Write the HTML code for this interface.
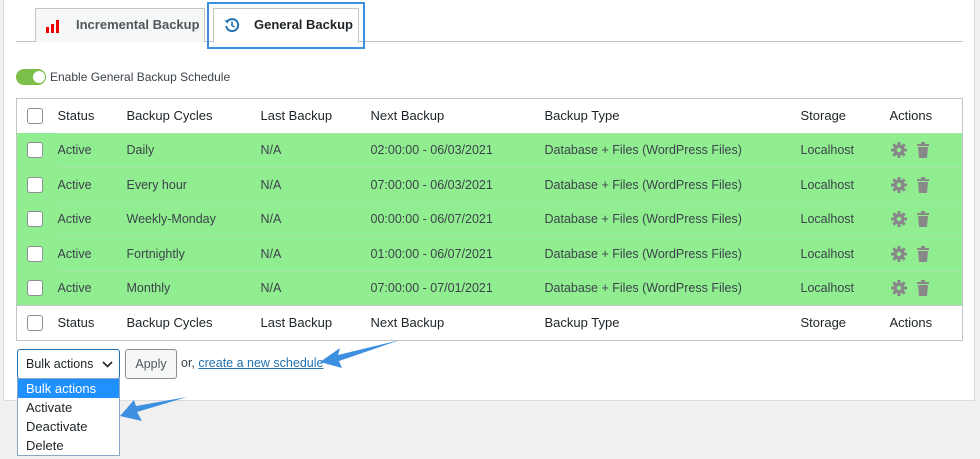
<!DOCTYPE html>
<html><head><style>
*{box-sizing:border-box;margin:0;padding:0}
body{width:980px;height:459px;background:#f0f0f1;font-family:"Liberation Sans",sans-serif;font-size:12.5px;color:#3c434a;position:relative;overflow:hidden}
.panel{position:absolute;left:3px;top:0;width:972px;height:401px;background:#fff;border:1px solid #dcdcde;border-top:none}
.abs{position:absolute;white-space:nowrap}
.tabline{position:absolute;left:16px;top:41px;width:947px;height:1px;background:#c3c4c7}
.tab{position:absolute;top:8px;height:34px;border:1px solid #c3c4c7;border-bottom:none;background:#f6f7f7;font-weight:bold;font-size:13px;line-height:32px;white-space:nowrap}
table{position:absolute;left:16px;top:98px;width:947px;border-collapse:collapse;border:1px solid #c3c4c7}
td{height:34.5px;padding:0;white-space:nowrap}
tr.g td{background:#90ee90;border-top:1px solid #a5e8a5}
tr.g td:first-child{border-top-color:#90ee90}
tr.h td{color:#1d2327;font-size:13px}
tr.f td{border-top:1px solid #c3c4c7}
.cb{display:inline-block;width:16px;height:16px;border:1px solid #8c8f94;border-radius:3px;background:#fff;vertical-align:middle;margin-left:10px}
.drop{position:absolute;left:17px;top:378px;width:103px;height:78px;border:1px solid #8ca6c8;background:#fff}
.drop div{height:19px;line-height:19px;padding-left:8px;font-size:13px;color:#1d2327}
</style></head><body>
<div class="panel"></div>
<div class="tabline"></div>
<div class="tab" style="left:35px;width:170px;color:#50575e;background:#f6f7f7">
 <svg class="abs" style="left:10px;top:10px" width="16" height="14"><rect x="0" y="8" width="3" height="6" fill="#e00"/><rect x="5" y="5" width="3" height="9" fill="#e00"/><rect x="10" y="1" width="3" height="13" fill="#e00"/></svg>
 <span class="abs" style="left:40px">Incremental Backup</span></div>
<div class="tab" style="left:213px;width:146px;background:#fff;color:#1d2327;height:35px">
 <svg class="abs" style="left:10px;top:8px" width="16" height="16" viewBox="0 0 16 16"><path d="M3 5A6 6 0 1 1 2.2 9" fill="none" stroke="#2271b1" stroke-width="2"/><path d="M0.5 3.5L3.5 6.5L5.5 2.5Z" fill="#2271b1"/><path d="M8 4.5V8.5L10.5 10" fill="none" stroke="#2271b1" stroke-width="1.6"/></svg>
 <span class="abs" style="left:40px">General Backup</span></div>
<div class="abs" style="left:207px;top:2px;width:158px;height:47px;border:2px solid #3d8fe0"></div>
<div class="abs" style="left:16px;top:69px;width:30px;height:16px;border-radius:8px;background:#7cbf48"></div>
<div class="abs" style="left:33px;top:71px;width:12px;height:12px;border-radius:6px;background:#fff"></div>
<div class="abs" style="left:50px;top:70px;font-size:12px;color:#3c434a">Enable General Backup Schedule</div>
<table>
<colgroup><col style="width:41px"><col style="width:69px"><col style="width:134px"><col style="width:110px"><col style="width:174px"><col style="width:256px"><col style="width:89px"><col></colgroup>
<tr class="h"><td><span class="cb"></span></td><td>Status</td><td>Backup Cycles</td><td>Last Backup</td><td>Next Backup</td><td>Backup Type</td><td>Storage</td><td>Actions</td></tr>
<tr class="g"><td><span class="cb"></span></td><td>Active</td><td>Daily</td><td>N/A</td><td>02:00:00 - 06/03/2021</td><td>Database + Files (WordPress Files)</td><td>Localhost</td><td class="ic"></td></tr>
<tr class="g"><td><span class="cb"></span></td><td>Active</td><td>Every hour</td><td>N/A</td><td>07:00:00 - 06/03/2021</td><td>Database + Files (WordPress Files)</td><td>Localhost</td><td class="ic"></td></tr>
<tr class="g"><td><span class="cb"></span></td><td>Active</td><td>Weekly-Monday</td><td>N/A</td><td>00:00:00 - 06/07/2021</td><td>Database + Files (WordPress Files)</td><td>Localhost</td><td class="ic"></td></tr>
<tr class="g"><td><span class="cb"></span></td><td>Active</td><td>Fortnightly</td><td>N/A</td><td>01:00:00 - 06/07/2021</td><td>Database + Files (WordPress Files)</td><td>Localhost</td><td class="ic"></td></tr>
<tr class="g"><td><span class="cb"></span></td><td>Active</td><td>Monthly</td><td>N/A</td><td>07:00:00 - 07/01/2021</td><td>Database + Files (WordPress Files)</td><td>Localhost</td><td class="ic"></td></tr>
<tr class="h f"><td><span class="cb"></span></td><td>Status</td><td>Backup Cycles</td><td>Last Backup</td><td>Next Backup</td><td>Backup Type</td><td>Storage</td><td>Actions</td></tr>
</table>
<script>
document.querySelectorAll('td.ic').forEach(function(t){t.innerHTML='<svg width="44" height="18" viewBox="0 0 44 18" style="vertical-align:middle;margin-left:1px"><g fill="#888"><circle cx="8" cy="9" r="5.5"/><g stroke="#888" stroke-width="3"><path d="M8 1v16M0 9h16M2.3 3.3l11.4 11.4M13.7 3.3L2.3 14.7"/></g><circle cx="8" cy="9" r="2.2" fill="#90ee90"/><rect x="26" y="3" width="12" height="2"/><rect x="30" y="1" width="4" height="2"/><path d="M27 6h10l-1 11h-8z"/></g></svg>';});
</script>
<div class="abs" style="left:17px;top:349px;width:103px;height:30px;border:1px solid #2271b1;border-radius:3px;background:#fff;line-height:28px;padding-left:8px;color:#1d2327">Bulk actions
 <svg class="abs" style="left:84px;top:11px" width="11" height="7"><path d="M1 1l4.5 4.5L10 1" fill="none" stroke="#1d2327" stroke-width="1.6"/></svg></div>
<div class="abs" style="left:125px;top:349px;width:52px;height:30px;border:1px solid #8c8f94;border-radius:3px;background:#f6f7f7;line-height:28px;text-align:center;color:#50575e">Apply</div>
<div class="abs" style="left:181px;top:356px;color:#3c434a">or, <span style="color:#2271b1;text-decoration:underline">create a new schedule</span></div>
<div class="drop"><div style="background:#1e90ff;color:#fff">Bulk actions</div><div>Activate</div><div>Deactivate</div><div>Delete</div></div>
<svg class="abs" style="left:0;top:0" width="980" height="459">
<path d="M320 362L340 348L338 355L400 340L339 361L342 368Z" fill="#3d8fe0"/>
<path d="M120 416L134 400L136 406L187 397L137 412L142 421Z" fill="#3d8fe0"/>
</svg>
</body></html>
